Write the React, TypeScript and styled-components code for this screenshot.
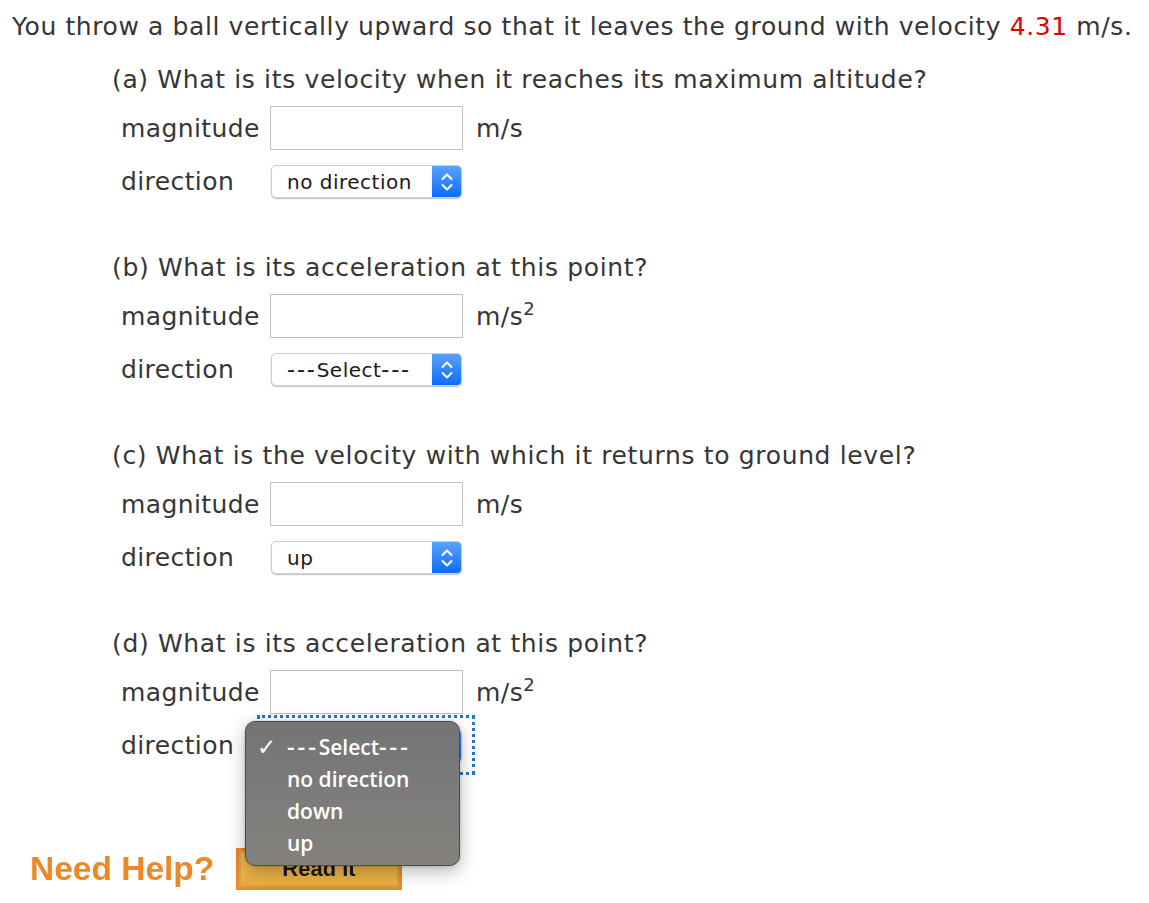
import React from "react";
import styled, { createGlobalStyle } from "styled-components";

const Global = createGlobalStyle`
  html, body { margin: 0; padding: 0; background: #fff; }
  body { font-family: "DejaVu Sans", Verdana, sans-serif; color: #363636; }
`;

const Page = styled.div`
  padding: 12px 0 0 12px;
  width: 1149px;
  height: 903px;
  box-sizing: border-box;
  overflow: hidden;
`;

const Question = styled.div`
  font-size: 25px;
  letter-spacing: 0.6px;
  line-height: 30px;
  white-space: nowrap;
`;

const Given = styled.span`
  color: #e00000;
`;

const Parts = styled.div`
  margin-left: 100px;
  margin-top: 23px;
  display: flex;
  flex-direction: column;
`;

const Part = styled.section`
  display: flex;
  flex-direction: column;
  height: 188px;
`;

const PartTitle = styled.div`
  font-size: 25px;
  letter-spacing: 0.65px;
  line-height: 30px;
  white-space: nowrap;
  margin-bottom: 11px;
`;

const Row = styled.div<{ $h: number; $gap?: number }>`
  display: flex;
  align-items: center;
  height: ${(p) => p.$h}px;
  margin-left: 9px;
  margin-bottom: ${(p) => p.$gap ?? 0}px;
`;

const Label = styled.span`
  width: 149px;
  flex: none;
  font-size: 25px;
  letter-spacing: 0.4px;
  white-space: nowrap;
`;

const Input = styled.div`
  width: 193px;
  height: 44px;
  box-sizing: border-box;
  border: 1.5px solid #bfbfbf;
  background: #fff;
`;

const Unit = styled.span`
  font-size: 25px;
  letter-spacing: 0.5px;
  margin-left: 13px;
  white-space: nowrap;
`;

const Sup = styled.sup`
  font-size: 18px;
  vertical-align: 10px;
  line-height: 0;
`;

const SelectWrap = styled.div`
  position: relative;
  width: 191px;
  height: 33px;
  margin-left: 1px;
`;

const Select = styled.div`
  width: 191px;
  height: 33px;
  box-sizing: border-box;
  border: 1px solid #cfcfcf;
  border-radius: 5px;
  background: #fff;
  box-shadow: 0 1px 1.5px rgba(0, 0, 0, 0.25);
  display: flex;
  align-items: center;
  overflow: hidden;
`;

const SelectText = styled.span`
  flex: 1;
  padding-left: 15px;
  font-size: 20px;
  letter-spacing: 0.5px;
  color: #1a1a1a;
  white-space: nowrap;
`;

const Dash = styled.span<{ $s: number }>`
  letter-spacing: ${(p) => p.$s}px;
  font-size: 1.12em;
  line-height: 0;
`;

const Arrow = styled.div`
  width: 29px;
  align-self: stretch;
  background: linear-gradient(#5aa3ff, #0b6cff);
  display: flex;
  align-items: center;
  justify-content: center;
`;

const FocusRing = styled.div`
  position: absolute;
  left: -14px;
  top: -14px;
  right: -13px;
  bottom: -13px;
  border: 3px dotted #1a78d4;
  pointer-events: none;
`;

const Menu = styled.div`
  position: absolute;
  left: -26px;
  top: -8px;
  width: 215px;
  height: 145px;
  box-sizing: border-box;
  border-radius: 10px;
  border: 1px solid #4a4a4a;
  background: linear-gradient(180deg, #737475 0%, #7d7c7b 55%, #84817c 100%);
  box-shadow: 0 6px 18px rgba(0, 0, 0, 0.28), 0 0 3px rgba(0, 0, 0, 0.2);
  padding-top: 9px;
  z-index: 5;
`;

const MenuItem = styled.div`
  position: relative;
  height: 32px;
  line-height: 32px;
  padding-left: 41px;
  font-family: "Open Sans", "Liberation Sans", sans-serif;
  font-weight: 600;
  font-size: 21px;
  color: #fff;
  white-space: nowrap;
`;

const Check = styled.span`
  position: absolute;
  left: 11px;
  top: 0;
  font-family: "DejaVu Sans", sans-serif;
  font-size: 23px;
  font-weight: 700;
`;

const HelpRow = styled.div`
  display: flex;
  align-items: center;
  margin-top: 31px;
  margin-left: 18px;
  height: 42px;
`;

const NeedHelp = styled.span`
  font-family: "Liberation Sans", Arial, sans-serif;
  font-weight: 700;
  font-size: 33.5px;
  color: #ee8826;
  width: 206px;
  filter: blur(0.4px);
`;

const ReadIt = styled.div`
  width: 166px;
  height: 42px;
  box-sizing: border-box;
  border: 3px solid #e88b2c;
  box-shadow: inset 0 0 0 2px #d9a24a;
  background: linear-gradient(#f2bf55, #e9ad3c);
  display: flex;
  align-items: center;
  justify-content: center;
  font-family: "Liberation Sans", Arial, sans-serif;
  font-weight: 700;
  font-size: 22px;
  color: #1a1a1a;
  filter: blur(0.4px);
`;

const Chevrons = () => (
  <svg width="14" height="22" viewBox="0 0 14 22" fill="none">
    <path d="M2.5 8 L7 3.5 L11.5 8" stroke="#fff" strokeWidth="2" strokeLinecap="round" strokeLinejoin="round" />
    <path d="M2.5 14 L7 18.5 L11.5 14" stroke="#fff" strokeWidth="2" strokeLinecap="round" strokeLinejoin="round" />
  </svg>
);

const OptionText = ({ text, dash }: { text: string; dash: number }) => {
  if (text.startsWith("---")) {
    return (
      <>
        <Dash $s={dash}>---</Dash>Select<Dash $s={dash}>---</Dash>
      </>
    );
  }
  return <>{text}</>;
};

type PartData = { title: string; unit: "v" | "a"; selected: string; open?: boolean };

const parts: PartData[] = [
  { title: "(a) What is its velocity when it reaches its maximum altitude?", unit: "v", selected: "no direction" },
  { title: "(b) What is its acceleration at this point?", unit: "a", selected: "---Select---" },
  { title: "(c) What is the velocity with which it returns to ground level?", unit: "v", selected: "up" },
  { title: "(d) What is its acceleration at this point?", unit: "a", selected: "---Select---", open: true },
];

const options = ["---Select---", "no direction", "down", "up"];

export default function App() {
  return (
    <>
      <Global />
      <Page>
        <Question>
          You throw a ball vertically upward so that it leaves the ground with velocity <Given>4.31</Given> m/s.
        </Question>
        <Parts>
          {parts.map((p) => (
            <Part key={p.title}>
              <PartTitle>{p.title}</PartTitle>
              <Row $h={44} $gap={15}>
                <Label>magnitude</Label>
                <Input />
                <Unit>
                  m/s{p.unit === "a" && <Sup>2</Sup>}
                </Unit>
              </Row>
              <Row $h={33}>
                <Label>direction</Label>
                <SelectWrap>
                  <Select>
                    <SelectText>
                      <OptionText text={p.selected} dash={1.8} />
                    </SelectText>
                    <Arrow>
                      <Chevrons />
                    </Arrow>
                  </Select>
                  {p.open && (
                    <>
                      <FocusRing />
                      <Menu>
                        {options.map((o) => (
                          <MenuItem key={o}>
                            {o === p.selected && <Check>✓</Check>}
                            <OptionText text={o} dash={3} />
                          </MenuItem>
                        ))}
                      </Menu>
                    </>
                  )}
                </SelectWrap>
              </Row>
            </Part>
          ))}
        </Parts>
        <HelpRow>
          <NeedHelp>Need Help?</NeedHelp>
          <ReadIt>Read It</ReadIt>
        </HelpRow>
      </Page>
    </>
  );
}
